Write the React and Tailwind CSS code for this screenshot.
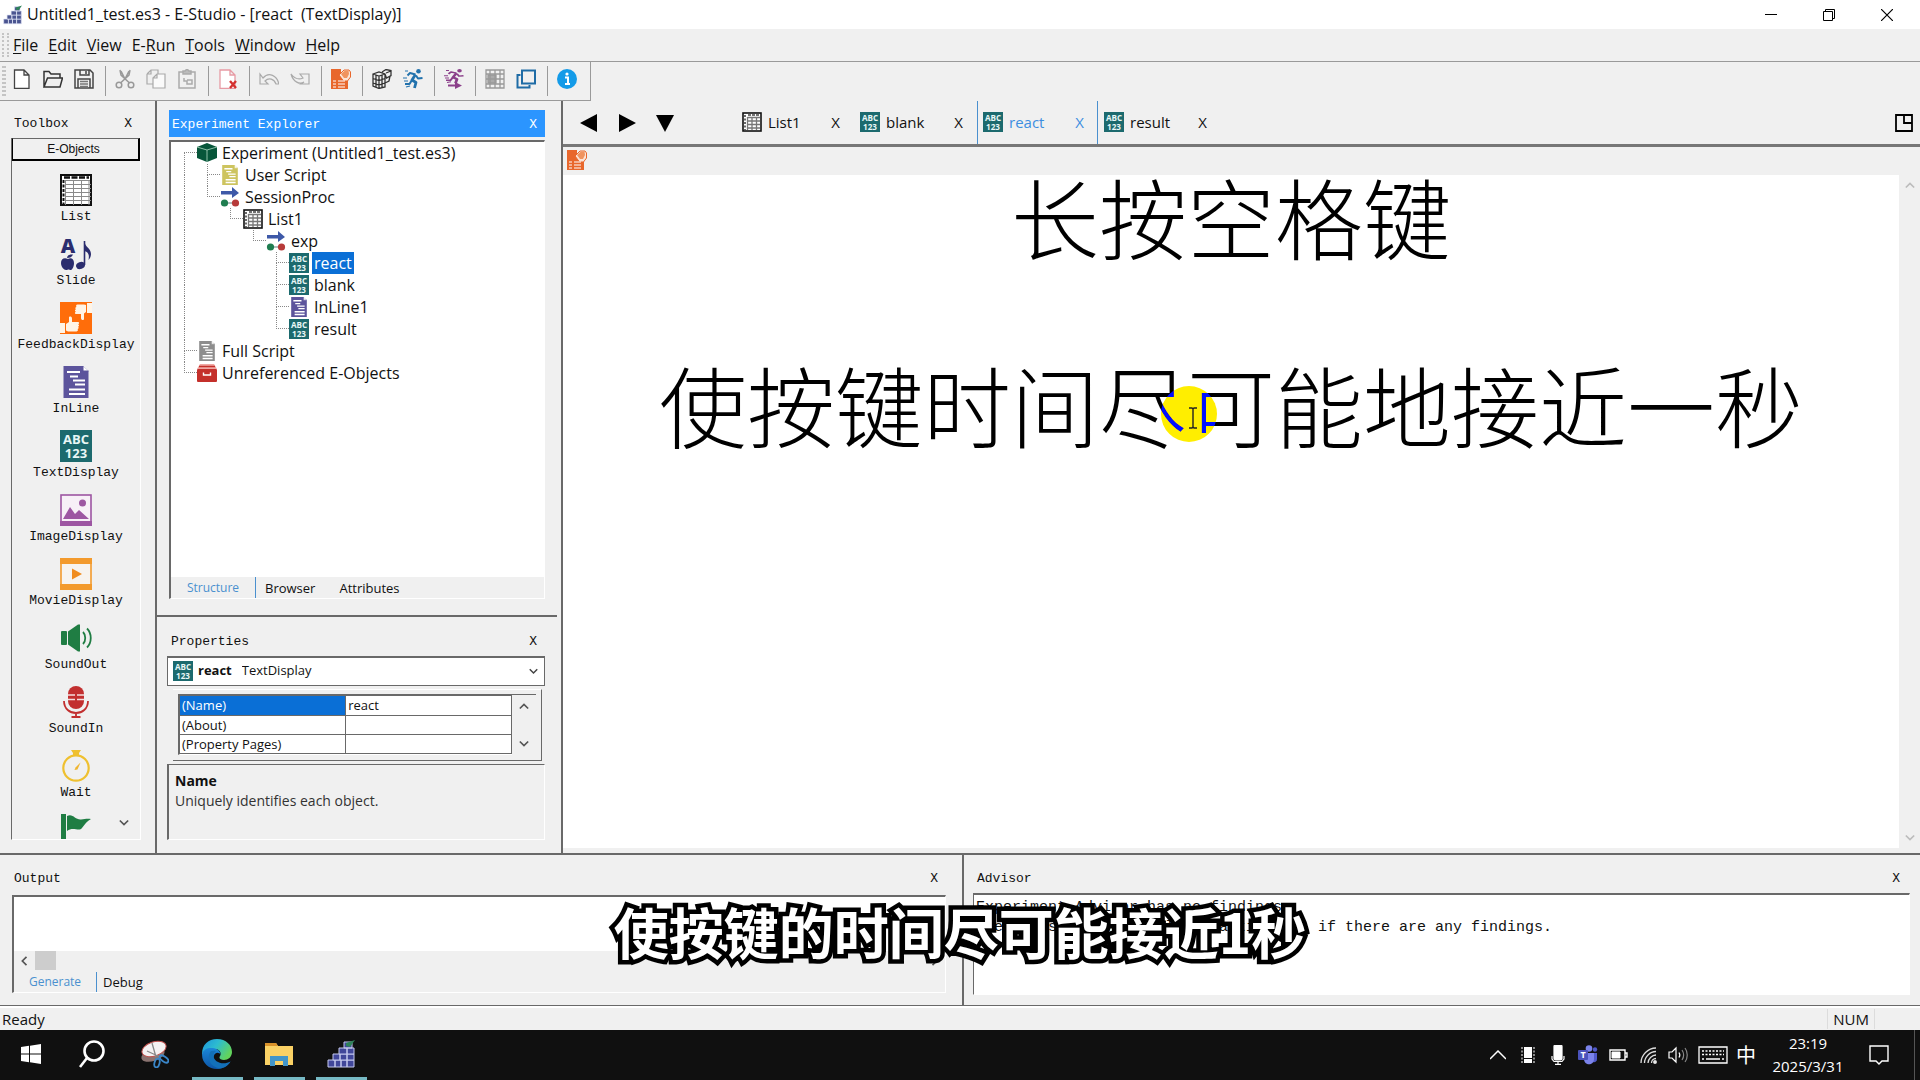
import React, { useState } from "react";

/* ---------- object icons ---------- */

const ListIcon = ({ className }) => (
  <svg viewBox="0 0 32 32" className={className} aria-hidden="true">
    <rect x="1" y="1" width="30" height="30" fill="#fff" stroke="#111" strokeWidth="2" />
    <path d="M4 3.500h25" stroke="#111" strokeWidth="2.400" strokeDasharray="6 1.500" />
    <path d="M3.500 6v24" stroke="#111" strokeWidth="2" strokeDasharray="3 1.500" />
    <path d="M5 6.500h25M5 10.500h26M5 14.500h26M5 18.500h26M5 22.500h26M5 26.500h26M5.500 6v25M13.500 6v25M21.500 6v25M29 6v25" stroke="#8a8a8a" strokeWidth="1" />
  </svg>
);

const SmallListIcon = ({ className }) => (
  <svg viewBox="0 0 20 20" className={className} aria-hidden="true">
    <rect x="1" y="1" width="18" height="18" fill="#fff" stroke="#111" strokeWidth="1.600" />
    <path d="M6 3h12" stroke="#444" strokeWidth="1.600" strokeDasharray="3 1" />
    <path d="M3 3v15" stroke="#444" strokeWidth="1.600" strokeDasharray="2 1.500" />
    <path d="M5.500 5.500H18M5.500 9H18M5.500 12.500H18M5.500 16H18M5.500 5v13M10 5v13M14.500 5v13" stroke="#777" strokeWidth="1.300" />
  </svg>
);

const TextIcon = ({ className }) => (
  <svg viewBox="0 0 32 32" className={className} aria-hidden="true">
    <rect width="32" height="32" fill="#1c6a6e" />
    <g fill="#e8f7f6" fontFamily="Open Sans, sans-serif" fontWeight="700" fontSize="13" textAnchor="middle">
      <text x="16" y="14">ABC</text>
      <text x="16" y="28">123</text>
    </g>
  </svg>
);

const ScriptIcon = ({ className, color }) => (
  <svg viewBox="0 0 32 32" className={className} aria-hidden="true">
    <path d="M3.500 0H23l5.500 5V32h-25z" fill={color} />
    <path d="M23 0v5h5.500" fill="#fff" stroke={color} />
    <path d="M7 6h13M10 10.500h8M13 14.500h12M15 18.500h10M9 23.500h16M9 28h16" stroke="#fff" strokeWidth="2.200" />
  </svg>
);

const SlideIcon = ({ className }) => (
  <svg viewBox="0 0 32 32" className={className} aria-hidden="true">
    <text x="8" y="15" fontFamily="Open Sans, sans-serif" fontWeight="800" fontSize="20" fill="#2b2d6e" textAnchor="middle">A</text>
    <path d="M8 21C4 19 1 21 1 25s3 7 5 7 1.500-.6 2.200-.6S10 32 11 32s3-3 3-7-3-6-6-4z" fill="#2b2d6e" />
    <path d="M7 20c0-3 3-4 6-3.500C12 19 10 20 7 20z" fill="#2b2d6e" />
    <path d="M24.500 3v24" stroke="#2b2d6e" strokeWidth="1.600" />
    <ellipse cx="20.500" cy="27.500" rx="4.500" ry="3.500" fill="#2b2d6e" transform="rotate(-20 20.500 27.500)" />
    <path d="M24.500 3c0 6 6.500 7 6.500 13 0 3-1.500 5-2.500 6 1-5 0-8-4-9" fill="#2b2d6e" />
  </svg>
);

const FeedbackIcon = ({ className }) => (
  <svg viewBox="0 0 32 32" className={className} aria-hidden="true">
    <rect width="32" height="32" fill="#ff6d0a" />
    <path d="M0 21h5v10H0zM6 22l3-2V15.500c0-1.500 3-1.500 3 1V20h6c1.500 0 1.500 2 0 2.200 1.500.3 1.300 2.300 0 2.500 1 .4.800 2.300-.5 2.400.8.500.5 2.400-1 2.400H8l-2-1z" fill="#fff4e6" />
    <path d="M27 1h5v10h-5zM26 3v7l-2 1.500V17c0 1.500-3 1.500-3-1v-4h-5c-1.500 0-1.500-2 0-2.200-1.500-.3-1.300-2.300 0-2.500-1-.4-.8-2.300.5-2.400-.8-.5-.5-2.400 1-2.400H24z" fill="#fff4e6" />
  </svg>
);

const ImageIcon = ({ className }) => (
  <svg viewBox="0 0 32 32" className={className} aria-hidden="true">
    <rect x="1" y="1" width="30" height="30" fill="#f7f0f7" stroke="#9d56a2" strokeWidth="1.600" />
    <rect y="27" width="32" height="5" fill="#9d56a2" />
    <circle cx="22.500" cy="9" r="3.500" fill="#9d56a2" />
    <path d="M3 25l7-12 5 7 4-4 10 9z" fill="#9d56a2" />
  </svg>
);

const MovieIcon = ({ className }) => (
  <svg viewBox="0 0 32 32" className={className} aria-hidden="true">
    <rect x="1" y="1" width="30" height="30" fill="#f7f3ee" stroke="#f39a2c" strokeWidth="1.600" />
    <path d="M0 0h32v6H0zM0 26h32v6H0z" fill="#f39a2c" />
    <path d="M12 10.500v11l10-5.500z" fill="#f08c1e" />
  </svg>
);

const SoundOutIcon = ({ className }) => (
  <svg viewBox="0 0 32 32" className={className} aria-hidden="true">
    <rect x="1" y="9" width="6" height="14" rx="1" fill="#1f7d43" />
    <path d="M8 9.500L18 2.500h2v27h-2L8 22.500z" fill="#1f7d43" />
    <path d="M23 10c3 3 3 9 0 12M27 6.500c5 5 5 14 0 19" fill="none" stroke="#1f7d43" strokeWidth="1.800" />
  </svg>
);

const SoundInIcon = ({ className }) => (
  <svg viewBox="0 0 32 32" className={className} aria-hidden="true">
    <rect x="8" y="0" width="16" height="23" rx="8" fill="#c22f2f" />
    <path d="M8 9h7M17 9h7M8 13.500h7M17 13.500h7" stroke="#f5dede" strokeWidth="1.600" />
    <path d="M4 15c0 16 24 16 24 0M16 27v4M11.500 31h9" fill="none" stroke="#c22f2f" strokeWidth="1.800" />
  </svg>
);

const WaitIcon = ({ className }) => (
  <svg viewBox="0 0 32 32" className={className} aria-hidden="true">
    <path d="M11 0h10l-2 3v2h-6V3z" fill="#efc02f" />
    <circle cx="16" cy="18" r="12.700" fill="none" stroke="#efc02f" strokeWidth="2.200" />
    <path d="M20.500 12.500l-3 7-3 .5 1-2.500z" fill="#efb52f" />
  </svg>
);

const FlagIcon = ({ className }) => (
  <svg viewBox="0 0 32 32" className={className} aria-hidden="true">
    <path d="M1 0h5v32H1z" fill="#1f7d43" />
    <path d="M7 2c6-3 8 4 14 3.500 4-.5 6-1 10-.5-4 2-6 5-9 9-3 4-9-2-15 3z" fill="#1f7d43" />
  </svg>
);

const ProcIcon = ({ className }) => (
  <svg viewBox="0 0 20 20" className={className} aria-hidden="true">
    <path d="M1 4h11V0l7 6-7 5V7.500H1z" fill="#3e59a8" />
    <path d="M5 16h10" stroke="#9aa" strokeWidth="1.500" />
    <circle cx="4.500" cy="16" r="3.600" fill="#1f7d50" />
    <circle cx="15.500" cy="16" r="3.600" fill="#b73a3a" />
  </svg>
);

const CubeIcon = ({ className }) => (
  <svg viewBox="0 0 20 20" className={className} aria-hidden="true">
    <path d="M0 4l10-4 10 4v11l-10 4-10-4z" fill="#07563a" />
    <path d="M0 4l10 3 10-3M10 7v12" fill="none" stroke="#8fc0a8" strokeWidth="1" />
  </svg>
);

const DrawerIcon = ({ className }) => (
  <svg viewBox="0 0 20 20" className={className} aria-hidden="true">
    <path d="M3 1h14l3 5H0z" fill="#f0a8a4" />
    <path d="M2 3.500h16" stroke="#c4302b" strokeWidth="1.500" />
    <rect y="6" width="20" height="13" rx="1" fill="#c4302b" />
    <path d="M6.500 9.500v2.500h7V9.500" fill="none" stroke="#fff" strokeWidth="1.400" />
  </svg>
);

/* ---------- toolbar icons ---------- */

const Svg20 = ({ children, ...rest }) => (
  <svg viewBox="0 0 20 20" className="w-5 h-5" fill="none" aria-hidden="true" {...rest}>
    {children}
  </svg>
);

const LogIcon = () => (
  <Svg20>
    <path d="M0 0h10v9h7v11H0z" fill="#e8672c" />
    <path d="M8 6l5-5h5l1.500 2v5l-3 4h-4z" fill="#fbe3d6" stroke="#e8672c" strokeWidth="1" />
    <path d="M10 5l4-3.500h3.500L18 5l-2 4h-3z" fill="#f0935f" />
    <path d="M2 12h3M7 12h7M2 15h3M7 15h7M2 18h3M7 18h7" stroke="#fff" strokeWidth="1.100" />
  </Svg20>
);

const Runner = () => (
  <>
    <circle cx="15.500" cy="2.300" r="2.300" fill="currentColor" />
    <path d="M12.500 5.500L9 11l4 2.500-1.500 5.500" stroke="currentColor" strokeWidth="2.800" strokeLinejoin="round" />
    <path d="M12.500 5.500L7 4 4.500 6.500M13 6.500l2 3 4.500-.5M9 11l-2.500 4H2" stroke="currentColor" strokeWidth="2" strokeLinejoin="round" />
    <path d="M2 2h3M0 9h4M1 12h4M3 18l4-1" stroke="currentColor" strokeWidth="1.200" />
  </>
);

const toolbar = [
  [
    { name: "New", icon: <Svg20 stroke="#444" strokeWidth="1.300"><path d="M2.500 1H12l5 5v13.500H2.500zM12 1v5h5" fill="#fff" /></Svg20> },
    { name: "Open", icon: <Svg20 stroke="#333" strokeWidth="1.500"><path d="M1 18V2.500h5l2 2.500h9v4M1 18l3.500-9H19.500L17 18z" /></Svg20> },
    { name: "Save", icon: <Svg20 stroke="#444" strokeWidth="1.500"><path d="M1 1h15l3 3v15H1z" /><path d="M6 1v5h9V1M12 2v3M4 19v-9h12v9" /><path d="M6 12.500h8M6 15h8M6 17.500h8" stroke="#777" /></Svg20> },
  ],
  [
    { name: "Cut", icon: <Svg20 stroke="#999" strokeWidth="1.500"><circle cx="4" cy="16" r="2.800" /><circle cx="16" cy="16" r="2.800" /><path d="M5 1l1 5 8.500 8M15 1l-1 5-8.500 8M6 2l4 8M14 2l-4 8" /></Svg20> },
    { name: "Copy", icon: <Svg20 stroke="#aaa" strokeWidth="1.200"><path d="M1 5l4-4h7v4M1 5v10h6M1 5h4V1" /><path d="M7 9l4-4h8v14H7zM7 9h4V5" fill="#fafafa" /></Svg20> },
    { name: "Paste", icon: <Svg20 stroke="#aaa" strokeWidth="1.500"><path d="M2 3h16v16H2z" /><path d="M6 5V2h2l2-2 2 2h2v3z" fill="#bbb" /><path d="M7 9v3h3v3h5v-4h-5" /></Svg20> },
  ],
  [
    { name: "Delete", icon: <Svg20 stroke="#e79aa4" strokeWidth="1.300"><path d="M2 1h10l5 5v13.500H2zM12 1v5h5" fill="#fff" /><path d="M12 12l6 7M18 12l-6 7" stroke="#d3302f" strokeWidth="2.400" /></Svg20> },
  ],
  [
    { name: "Undo", icon: <Svg20 stroke="#aaa" strokeWidth="1.200"><path d="M1 5v10h8l-3-3c4-4 9-2 11 3h3C18 7 10 2 4 9z" /></Svg20> },
    { name: "Redo", icon: <Svg20 stroke="#aaa" strokeWidth="1.200"><path d="M19 5v10h-8l3-2C10 16 3 13 1 5c4 5 8 6 12 4l-3-4z" /></Svg20> },
  ],
  [{ name: "Generate", icon: <LogIcon /> }],
  [
    { name: "Package", icon: <Svg20 stroke="#333" strokeWidth="1.300"><path d="M1 5l6-2 6 2v13l-6 1.500L1 17zM1 5l6 2 6-2M1 9.500l6 2 6-2M1 14l6 2 6-2M7 7v12M4 6v12M10 6v12M10 3l4-2.500 5 1v5L14.500 9 13 5M13 14l4-2 1-5M14 4l5-2" /></Svg20> },
    { name: "Run", icon: <Svg20 className="w-5 h-5 text-[#2272ad]"><Runner /></Svg20> },
  ],
  [
    {
      name: "Run to here",
      icon: (
        <Svg20 className="w-5 h-5 text-[#8b3f8a]">
          <g transform="scale(1 .75)"><Runner /></g>
          <path d="M4 15.500h7V13l7 3.500-7 3.500v-2.500H4z" fill="currentColor" />
        </Svg20>
      ),
    },
  ],
  [
    { name: "Grid", icon: <Svg20 stroke="#999" strokeWidth="1.300"><path d="M1 1h18v18H1z" /><path d="M3 6h8v8H3z" fill="#aaa" /><path d="M1 5h18M1 10h18M1 15h18M5 1v18M10 1v18M15 1v18" /></Svg20> },
    { name: "Windows", icon: <Svg20 stroke="#1f6ca6" strokeWidth="2"><path d="M6 1.500h13v13H6z" /><path d="M4.500 6H1.500v12.500h12V16" /></Svg20> },
  ],
  [
    { name: "Info", icon: <Svg20><circle cx="10" cy="10" r="10" fill="#149be8" /><circle cx="10" cy="5" r="1.600" fill="#fff" /><path d="M8 8.500h3V15M8 15h5" stroke="#fff" strokeWidth="2" /></Svg20> },
  ],
];

const AppLogo = ({ className, dark }) => (
  <svg viewBox="0 0 28 28" className={className} aria-hidden="true">
    <g fill={dark ? "#41479a" : "#4a5490"} stroke={dark ? "#c5c9ee" : "#dfe3f4"} strokeWidth="1">
      <path d="M1 20h7v7H1zM8 20h6v7H8zM14 20h6v7h-6zM20 20h7v7h-7z" />
      <path d="M6 14h7v6H6zM13 14h7v6h-7zM20 14h7v6h-7z" />
      <path d="M12 8h8v6h-8zM20 8h7v6h-7zM17 2h8v6h-8z" />
    </g>
    <path d="M19 3l9-3-5 7-4-1z" fill="#2e8259" />
  </svg>
);

const Chevron = ({ className, d }) => (
  <svg viewBox="0 0 12 12" className={className} fill="none" stroke="currentColor" strokeWidth="2" aria-hidden="true">
    <path d={d} />
  </svg>
);

const UP = "M1 9l5-5 5 5";
const DOWN = "M1 3l5 5 5-5";
const LEFT = "M9 1L4 6l5 5";
const RIGHT = "M3 1l5 5-5 5";

/* ---------- data ---------- */

const menus = [
  ["", "F", "ile"],
  ["", "E", "dit"],
  ["", "V", "iew"],
  ["E-", "R", "un"],
  ["", "T", "ools"],
  ["", "W", "indow"],
  ["", "H", "elp"],
];

const tools = [
  { name: "List", Icon: ListIcon },
  { name: "Slide", Icon: SlideIcon },
  { name: "FeedbackDisplay", Icon: FeedbackIcon },
  { name: "InLine", Icon: ScriptIcon, color: "#5c549c" },
  { name: "TextDisplay", Icon: TextIcon },
  { name: "ImageDisplay", Icon: ImageIcon },
  { name: "MovieDisplay", Icon: MovieIcon },
  { name: "SoundOut", Icon: SoundOutIcon },
  { name: "SoundIn", Icon: SoundInIcon },
  { name: "Wait", Icon: WaitIcon },
  { name: "", Icon: FlagIcon },
];

// guides: F first, T tee, L last, | pass through, space empty
const tree = [
  { guides: "F", name: "Experiment (Untitled1_test.es3)", Icon: CubeIcon },
  { guides: "|T", name: "User Script", Icon: ScriptIcon, color: "#cdc45f" },
  { guides: "|L", name: "SessionProc", Icon: ProcIcon },
  { guides: "| L", name: "List1", Icon: SmallListIcon },
  { guides: "|  L", name: "exp", Icon: ProcIcon },
  { guides: "|   T", name: "react", Icon: TextIcon },
  { guides: "|   T", name: "blank", Icon: TextIcon },
  { guides: "|   T", name: "InLine1", Icon: ScriptIcon, color: "#5c549c" },
  { guides: "|   L", name: "result", Icon: TextIcon },
  { guides: "T", name: "Full Script", Icon: ScriptIcon, color: "#8d8d8d" },
  { guides: "L", name: "Unreferenced E-Objects", Icon: DrawerIcon },
];

const docs = [
  { name: "List1", Icon: SmallListIcon, width: "w-[118px]" },
  { name: "blank", Icon: TextIcon, width: "w-[123px]" },
  { name: "react", Icon: TextIcon, width: "w-[121px]" },
  { name: "result", Icon: TextIcon, width: "w-[123px]" },
];

const properties = [
  ["(Name)", "react"],
  ["(About)", ""],
  ["(Property Pages)", ""],
];

/* ---------- shared bits ---------- */

const Grip = () => (
  <span className="w-[7px] self-stretch my-1 ml-[2px] border-x-2 border-dotted border-[#c4c4c4]" />
);

const PanelTitle = ({ title, className }) => (
  <div className={`flex items-center justify-between font-['Liberation_Mono',monospace] text-[13px] leading-5 ${className}`}>
    <h2>{title}</h2>
    <button aria-label={`Close ${title}`}>X</button>
  </div>
);

const Guide = ({ type }) => (
  <span className="w-[23px] h-full flex pl-[10px]">
    <span className="flex-1 flex flex-col">
      <span
        className={`h-[11px] border-dotted border-[#888] ${"|TL".includes(type) ? "border-l" : ""} ${"FTL".includes(type) ? "border-b" : ""}`}
      />
      <span className={`h-[11px] border-dotted border-[#888] ${"F|T".includes(type) ? "border-l" : ""}`} />
    </span>
  </span>
);

const TitleBar = () => (
  <header className="h-[29px] shrink-0 bg-white flex items-center pl-[3px]">
    <AppLogo className="w-[19px] h-[22px]" />
    <h1 className="flex-1 ml-[5px] pb-[2px] text-[16px] leading-5 whitespace-pre">
      Untitled1_test.es3 - E-Studio - [react  (TextDisplay)]
    </h1>
    <div className="flex pr-1">
      <button aria-label="Minimize" className="w-[58px] h-7 flex items-center justify-center">
        <span className="w-3 h-px bg-black" />
      </button>
      <button aria-label="Restore" className="w-[58px] h-7 flex items-center justify-center">
        <svg viewBox="0 0 12 12" className="w-3 h-3" fill="none" stroke="#000" aria-hidden="true">
          <path d="M.500 2.500h9v9h-9zM2.500 2.500v-2h9v9h-2" />
        </svg>
      </button>
      <button aria-label="Close" className="w-[58px] h-7 flex items-center justify-center">
        <svg viewBox="0 0 12 12" className="w-3 h-3" stroke="#000" strokeWidth="1.200" aria-hidden="true">
          <path d="M0 0l12 12M12 0L0 12" />
        </svg>
      </button>
    </div>
  </header>
);

const MenuBar = () => (
  <nav className="h-[33px] shrink-0 flex items-center border-b border-[#9a9a9a]">
    <Grip />
    <ul className="flex gap-[10px] ml-1 text-[16px] leading-5">
      {menus.map(([pre, key, post]) => (
        <li key={post}>
          <button>
            {pre}
            <span className="underline underline-offset-2">{key}</span>
            {post}
          </button>
        </li>
      ))}
    </ul>
  </nav>
);

const Toolbar = () => (
  <div className="h-[39px] shrink-0 flex">
    <div className="flex border-b border-r border-[#9a9a9a] pr-2">
      <span className="w-[6px] flex">
        <Grip />
      </span>
      {toolbar.map((group, i) => (
        <React.Fragment key={i}>
          {i > 0 && <span className="w-[10px] my-1 border-r border-[#9a9a9a] mr-[3px] -ml-[3px]" />}
          {group.map((b) => (
            <button key={b.name} aria-label={b.name} className="w-[31px] pb-1 flex items-center justify-center">
              {b.icon}
            </button>
          ))}
        </React.Fragment>
      ))}
    </div>
  </div>
);

const Toolbox = () => (
  <aside className="w-[157px] shrink-0 border-r-2 border-[#696969] pl-[11px] pr-[14px] pb-[13px] flex flex-col min-h-0">
    <PanelTitle title="Toolbox" className="h-[37px] pt-[9px] pl-[3px] pr-[9px]" />
    <div className="flex-1 min-h-0 flex flex-col border-l border-b border-r border-l-[#696969] border-b-white border-r-white">
      <button className="h-[23px] shrink-0 border border-b-2 border-r-2 border-black border-t-[#696969] text-[12px] pr-1 font-['Liberation_Sans',sans-serif]">
        E-Objects
      </button>
      <div className="relative flex-1 min-h-0 overflow-hidden">
        <ul className="pt-[13px] flex flex-col gap-[10px]">
          {tools.map(({ name, Icon, color }) => (
            <li key={name}>
              <button className="w-full flex flex-col items-center font-['Liberation_Mono',monospace] text-[13px] leading-[22px]" aria-label={name || "Label"}>
                <Icon className="w-8 h-8" color={color} />
                {name}
              </button>
            </li>
          ))}
        </ul>
        <button aria-label="Scroll down" className="absolute bottom-2 right-2 w-4 h-4 flex items-center justify-center text-[#555]">
          <Chevron d={DOWN} className="w-[10px] h-[10px]" />
        </button>
      </div>
    </div>
  </aside>
);

const Explorer = ({ selected, onSelect }) => (
  <section className="flex-1 min-h-0 flex flex-col pt-[9px] pb-4 pl-3 pr-[16px]">
    <PanelTitle title="Experiment Explorer" className="h-[27px] pt-[2px] bg-[#2b95ff] text-white pl-[3px] pr-2" />
    <div className="mt-[3px] flex-1 min-h-0 flex flex-col border-t-2 border-l-2 border-[#696969] border-b border-r border-b-white border-r-white">
      <ul className="flex-1 bg-white pl-[3px] text-[16px] leading-[22px]">
        {tree.map(({ guides, name, Icon, color }) => (
          <li key={name} className="h-[22px] flex items-center">
            {guides.split("").map((g, i) => (
              <Guide key={i} type={g} />
            ))}
            <Icon className="w-5 h-5" color={color} />
            <button
              onClick={() => onSelect(name)}
              className={`ml-[3px] px-[2px] ${name === selected ? "bg-[#0a6fd6] text-white" : ""}`}
            >
              {name}
            </button>
          </li>
        ))}
      </ul>
      <div className="h-[21px] flex text-[13px] leading-5">
        <button className="w-[85px] border-r border-[#4a90cf] text-[#4a90cf] text-[12px]">Structure</button>
        <button className="ml-[9px]">Browser</button>
        <button className="ml-6">Attributes</button>
      </div>
    </div>
  </section>
);

const Properties = ({ selected }) => (
  <section className="border-t-2 border-[#696969] mr-1 pl-[10px] pr-3 pb-[13px]">
    <PanelTitle title="Properties" className="h-[39px] pt-[10px] pl-1 pr-2" />
    <div className="relative h-[30px] flex items-center bg-white border border-[#696969] border-t-2 pl-[5px] pb-px">
      <TextIcon className="w-5 h-5" />
      <label htmlFor="object" className="ml-[5px] text-[13px] font-bold">
        {selected}
      </label>
      <select id="object" className="flex-1 h-full pl-[10px] text-[13px] appearance-none bg-transparent">
        <option>TextDisplay</option>
      </select>
      <span className="absolute right-[6px] text-[#444]">
        <Chevron d={DOWN} className="w-[9px] h-[9px]" />
      </span>
    </div>
    <div className="mt-[3px] ml-[6px] mr-[3px] h-[72px] pt-1 pl-[5px] pr-[5px] flex border-t border-t-white border-r border-b border-[#696969]">
      <div className="flex-1 h-[61px] overflow-hidden border-l-2 border-t-2 border-b border-[#696969] border-b-white">
        <table className="w-full table-fixed border-collapse bg-white text-[13px] leading-4">
          <tbody>
            {properties.map(([name, value], i) => (
              <tr key={name} className="h-[19px]">
                <td className={`border-b border-r border-[#696969] p-0 pl-[2px] ${i === 0 ? "bg-[#0a6fd6] text-white" : ""}`}>
                  {name}
                </td>
                <td className="border-b border-r border-[#696969] p-0 pl-[2px]">{value}</td>
              </tr>
            ))}
          </tbody>
        </table>
      </div>
      <div className="w-[24px] h-[61px] py-[6px] flex flex-col items-center justify-between border-t border-[#696969] text-[#555]">
        <Chevron d={UP} className="w-[10px] h-[10px]" />
        <Chevron d={DOWN} className="w-[10px] h-[10px]" />
      </div>
    </div>
    <div className="mt-[3px] h-[76px] border-l-2 border-t border-[#696969] border-b border-r border-b-white border-r-white pl-[6px] pt-[6px] text-[14px] leading-5">
      <h3 className="font-bold">Name</h3>
      <p className="text-[#333]">Uniquely identifies each object.</p>
    </div>
  </section>
);

const Editor = () => (
  <main className="flex-1 min-w-0 border-l-2 border-[#696969] flex flex-col">
    <div className="h-[43px] shrink-0 flex items-center">
      <div className="flex gap-5 pl-[17px] w-[173px]">
        <button aria-label="Previous">
          <svg viewBox="0 0 18 18" className="w-[18px] h-[18px]" aria-hidden="true"><path d="M0 9L17 0v18z" /></svg>
        </button>
        <button aria-label="Next">
          <svg viewBox="0 0 18 18" className="w-[18px] h-[18px]" aria-hidden="true"><path d="M18 9L1 0v18z" /></svg>
        </button>
        <button aria-label="Window list">
          <svg viewBox="0 0 18 18" className="w-[18px] h-[18px]" aria-hidden="true"><path d="M9 18L0 1h18z" /></svg>
        </button>
      </div>
      <ul className="flex h-full text-[15px]">
        {docs.map(({ name, Icon, width }) => (
          <li
            key={name}
            className={`${width} flex items-center pl-[5px] pr-[13px] pb-px border-x ${
              name === "react" ? "border-[#4a90cf] text-[#3d8ee0]" : "border-transparent"
            }`}
          >
            <button className="flex items-center gap-[6px]">
              <Icon className="w-5 h-5" />
              {name}
            </button>
            <button className="ml-auto" aria-label={`Close ${name}`}>X</button>
          </li>
        ))}
      </ul>
      <button className="ml-auto mr-[7px]" aria-label="Float window">
        <svg viewBox="0 0 18 18" className="w-[18px] h-[18px]" fill="none" stroke="#000" strokeWidth="1.800" aria-hidden="true">
          <path d="M1 1h16v16H1zM9 1v8h8" />
        </svg>
      </button>
    </div>
    <div className="h-[31px] shrink-0 border-t-[3px] border-[#777] pl-1 pt-[3px] flex">
      <button aria-label="Object properties" className="w-5 h-5">
        <LogIcon />
      </button>
    </div>
    <div className="flex-1 min-h-0 flex bg-white border-b-[5px] border-[#f0f0f0]">
      <div className="relative flex-1 text-center bg-white isolate">
        <div className="-mt-[7px] text-[88px] leading-[94px] font-light font-['Noto_Sans_CJK_SC',sans-serif] text-black">
          <p>长按空格键</p>
          <p>&nbsp;</p>
          <p>使按键时间尽可能地接近一秒</p>
        </div>
        <span className="absolute left-1/2 top-[211px] -translate-x-[70px] w-14 h-14 rounded-full bg-[#0011ff] mix-blend-difference" />
        <svg viewBox="0 0 10 22" className="absolute left-1/2 top-[232px] -translate-x-[43px] w-[10px] h-[22px]" fill="none" stroke="#222" aria-hidden="true">
          <path d="M1 1h3l1 1 1-1h3M5 2v18M1 21h3l1-1 1 1h3" strokeWidth="1.400" />
        </svg>
      </div>
      <div className="w-[21px] py-[5px] flex flex-col items-center justify-between bg-[#f0f0f0] text-[#bcbcbc]">
        <Chevron d={UP} className="w-[10px] h-[10px]" />
        <Chevron d={DOWN} className="w-[10px] h-[10px]" />
      </div>
    </div>
  </main>
);

const BottomDock = () => (
  <div className="relative h-[153px] shrink-0 border-t-2 border-b border-[#696969] flex">
    <section className="w-[964px] shrink-0 border-r-2 border-[#696969] pl-3 pr-4 flex flex-col">
      <PanelTitle title="Output" className="h-[40px] pt-2 pl-[2px] pr-[8px]" />
      <div className="h-[98px] flex flex-col border-t-2 border-l-2 border-[#696969] border-b border-r border-b-white border-r-white">
        <div className="flex-1 bg-white" />
        <div className="h-[19px] flex items-center text-[#555] px-[5px]">
          <Chevron d={LEFT} className="w-[10px] h-[10px]" />
          <span className="ml-[6px] w-[21px] h-full bg-[#cdcdcd]" />
          <Chevron d={RIGHT} className="ml-auto w-[10px] h-[10px]" />
        </div>
        <div className="h-[22px] pt-[2px] flex text-[13px] leading-5">
          <button className="w-[83px] border-r border-[#4a90cf] text-[#4a90cf] text-[12px]">Generate</button>
          <button className="ml-[6px]">Debug</button>
        </div>
      </div>
    </section>
    <section className="flex-1 pl-[9px] pr-[10px]">
      <PanelTitle title="Advisor" className="h-[38px] pt-[10px] pl-1 pr-[10px]" />
      <div className="h-[102px] bg-white border-t-2 border-l border-[#696969] border-b border-r border-b-white border-r-white pl-[2px] pt-[3px] font-['Liberation_Mono',monospace] text-[15px] leading-5 whitespace-pre">
        <p>Experiment Advisor has no findings.</p>
        <p>The Advisor window will be activated  if there are any findings.</p>
      </div>
    </section>
    <p className="absolute top-[47px] left-1/2 -translate-x-1/2 whitespace-nowrap text-[55px] leading-[56px] font-bold text-white font-['Noto_Sans_CJK_SC',sans-serif] [-webkit-text-stroke:9px_#000] [paint-order:stroke_fill]">
      使按键的时间尽可能接近1秒
    </p>
  </div>
);

const StatusBar = () => (
  <footer className="h-[24px] shrink-0 border-t-2 border-white flex items-center text-[15px] leading-5">
    <span className="ml-[2px]">Ready</span>
    <span className="ml-auto mr-[45px] px-[5px] border-x border-[#dcdcdc]">NUM</span>
  </footer>
);

/* ---------- windows taskbar ---------- */

const taskbarItems = [
  {
    name: "Start",
    icon: (
      <svg viewBox="0 0 20 20" className="w-5 h-5" fill="#fff" aria-hidden="true">
        <path d="M0 3l8-1.200V9.500H0zM9 1.700L20 0v9.500H9zM0 10.500h8v7.700L0 17zM9 10.500h11V20L9 18.300z" />
      </svg>
    ),
  },
  {
    name: "Search",
    icon: (
      <svg viewBox="0 0 28 28" className="w-7 h-7" fill="none" stroke="#fff" strokeWidth="2.600" aria-hidden="true">
        <circle cx="15" cy="11" r="9.500" />
        <path d="M8 18l-7 9" />
      </svg>
    ),
  },
  {
    name: "Snipping Tool",
    icon: (
      <svg viewBox="0 0 28 28" className="w-7 h-7" fill="none" aria-hidden="true">
        <ellipse cx="12" cy="15" rx="12" ry="6" fill="#8a7370" transform="rotate(-18 12 15)" />
        <ellipse cx="13" cy="9" rx="12.500" ry="7" fill="#f5f2f2" stroke="#c0504d" transform="rotate(-18 13 9)" />
        <path d="M11 3l4 14M6 11l13 6" stroke="#888" strokeWidth="1.300" />
        <ellipse cx="16" cy="23" rx="2.500" ry="4.500" stroke="#3a86c8" strokeWidth="1.800" transform="rotate(15 16 23)" />
        <ellipse cx="23" cy="19" rx="2.500" ry="5" stroke="#3a86c8" strokeWidth="1.800" transform="rotate(-55 23 19)" />
      </svg>
    ),
  },
  {
    name: "Edge",
    open: true,
    icon: (
      <svg viewBox="0 0 30 30" className="w-[30px] h-[30px]" aria-hidden="true">
        <defs>
          <linearGradient id="edgeTop" x1="0" y1="0" x2="1" y2=".5">
            <stop offset="0" stopColor="#1c93dc" />
            <stop offset=".5" stopColor="#2dbcd0" />
            <stop offset="1" stopColor="#62d35c" />
          </linearGradient>
          <linearGradient id="edgeLow" x1="0" y1="0" x2="0" y2="1">
            <stop offset="0" stopColor="#1b86d8" />
            <stop offset="1" stopColor="#0d56a6" />
          </linearGradient>
        </defs>
        <path d="M15 0c9 0 15 6 15 13 0 5-4 8-8 8-3 0-5-1.500-4.500-3 3-4 0-8-5-8-6 0-11 4-12.400 6C-.5 6 6 0 15 0z" fill="url(#edgeTop)" />
        <path d="M.1 15.500C1 10 6 8.500 10.500 9c5 .5 8 3.500 8 6.500-1-2-5-3-6.500 1-2 5 3 10 9 9.500 4-.5 6-2 7.500-3.500C25 28 20 30 15 30 6.500 30-.3 23 .1 15.500z" fill="url(#edgeLow)" />
        <path d="M9 12c-5 6-1 16 9 17.500 4-.3 8-3 10.500-7-7 4-17 1-17-6 0-2 1-3.500 2.500-4.500-2-.7-4 0-5 0z" fill="#1370b8" />
      </svg>
    ),
  },
  {
    name: "File Explorer",
    open: true,
    icon: (
      <svg viewBox="0 0 28 24" className="w-7 h-6" aria-hidden="true">
        <path d="M0 1h11l2 3h15v19H0z" fill="#fad165" />
        <path d="M0 1h11l2 3H0z" fill="#d9922b" />
        <path d="M5 24V14h18v10h-5v-5h-8v5z" fill="#4295c9" />
      </svg>
    ),
  },
  { name: "E-Studio", open: true, icon: <AppLogo className="w-7 h-7" dark /> },
];

const Tray = () => (
  <div className="ml-auto flex items-center text-white">
    <div className="flex [&>span]:w-[30px] [&>span]:flex [&>span]:items-center [&>span]:justify-center">
      <span>
        <svg viewBox="0 0 16 10" className="w-4 h-[10px]" fill="none" stroke="#fff" strokeWidth="1.500" aria-hidden="true"><path d="M0 9l8-8 8 8" /></svg>
      </span>
      <span>
        <svg viewBox="0 0 14 18" className="w-[14px] h-[18px]" aria-hidden="true">
          <path d="M3 1h8v11H3zM3 13h8v4H3z" fill="#fff" />
          <path d="M1 1v16M13 1v16" stroke="#ccc" strokeWidth="1.300" strokeDasharray="2 1.500" />
        </svg>
      </span>
      <span>
        <svg viewBox="0 0 14 20" className="w-[14px] h-5" fill="none" stroke="#fff" strokeWidth="1.200" aria-hidden="true">
          <rect x="3" y="0" width="8" height="15" rx="1.500" fill="#fff" />
          <path d="M1 11v3l2 2.500h8l2-2.500v-3M7 16v3M4 19.400h6" />
        </svg>
      </span>
      <span>
        <svg viewBox="0 0 20 20" className="w-5 h-5" aria-hidden="true">
          <circle cx="11" cy="3.500" r="3.300" fill="#7b83eb" />
          <circle cx="17" cy="4.500" r="2.200" fill="#5059c9" />
          <path d="M14 8h5v6c0 2-2 4-4 3z" fill="#5059c9" />
          <path d="M6 8h10v6c0 7-10 7-10 0z" fill="#7b83eb" />
          <rect y="5" width="10" height="10" rx="1" fill="#4b53bc" />
          <text x="5" y="13" fontSize="9" fontWeight="700" fill="#fff" textAnchor="middle" fontFamily="Open Sans, sans-serif">T</text>
        </svg>
      </span>
      <span>
        <svg viewBox="0 0 19 12" className="w-[19px] h-3" fill="none" stroke="#fff" aria-hidden="true">
          <path d="M1 1h15v10H1zM16 4h2v4h-2" strokeWidth="1.400" />
          <path d="M3 3h8v6H3z" fill="#fff" />
        </svg>
      </span>
      <span>
        <svg viewBox="0 0 17 17" className="w-[17px] h-[17px]" fill="none" stroke="#ddd" strokeWidth="1.300" aria-hidden="true">
          <path d="M1 16C1 8 8 1 16 1M4.500 16C4.500 10 10 4.500 16 4.500M8 16c0-4 4-8 8-8M11.500 16c0-2.500 2-4.500 4.500-4.500" />
          <circle cx="15" cy="15" r="1.300" fill="#fff" />
        </svg>
      </span>
      <span>
        <svg viewBox="0 0 20 18" className="w-5 h-[18px]" fill="none" stroke="#fff" strokeWidth="1.200" aria-hidden="true">
          <path d="M1 6h3l4-4v14l-4-4H1zM11 6.500c1 1.500 1 3.500 0 5" />
          <path d="M14 4c2 3 2 7 0 10M17 2c3 4 3 10 0 14" stroke="#888" />
        </svg>
      </span>
    </div>
    <svg viewBox="0 0 30 18" className="ml-[5px] w-[30px] h-[18px]" fill="none" stroke="#fff" strokeWidth="1.300" aria-hidden="true">
      <path d="M1 1h28v16H1z" />
      <path d="M4 5h22M4 8.500h22" strokeDasharray="2 1.500" />
      <path d="M4 13h2M8 13h14M24 13h2" />
    </svg>
    <span className="ml-2 text-[20px] leading-6 font-['Noto_Sans_CJK_SC',sans-serif]">中</span>
    <time className="ml-[13px] w-[78px] text-center text-[15px] leading-[23px]">
      23:19
      <br />
      2025/3/31
    </time>
    <button aria-label="Notifications" className="ml-[22px] mr-[25px]">
      <svg viewBox="0 0 20 20" className="w-5 h-5" fill="none" stroke="#fff" strokeWidth="1.400" aria-hidden="true">
        <path d="M1 1h18v15h-6l-3 3-3-3H1z" />
      </svg>
    </button>
    <span className="w-[6px] h-[50px] border-l border-[#555]" />
  </div>
);

const Taskbar = () => (
  <div className="h-[50px] shrink-0 flex bg-[#101010]">
    {taskbarItems.map(({ name, icon, open }) => (
      <button key={name} aria-label={name} className="w-[62px] flex flex-col items-center">
        <span className="flex-1 flex items-center justify-center">{icon}</span>
        <span className={`w-[51px] h-[3px] ${open ? "bg-[#76b9c4]" : ""}`} />
      </button>
    ))}
    <Tray />
  </div>
);

export default function App() {
  const [selected, setSelected] = useState("react");

  return (
    <div className="h-screen flex flex-col overflow-hidden bg-[#f0f0f0] text-[#111] font-['Open_Sans',sans-serif]">
      <TitleBar />
      <MenuBar />
      <Toolbar />
      <div className="flex-1 min-h-0 flex">
        <Toolbox />
        <div className="w-[404px] shrink-0 flex flex-col">
          <Explorer selected={selected} onSelect={setSelected} />
          <Properties selected={selected} />
        </div>
        <Editor />
      </div>
      <BottomDock />
      <StatusBar />
      <Taskbar />
    </div>
  );
}
